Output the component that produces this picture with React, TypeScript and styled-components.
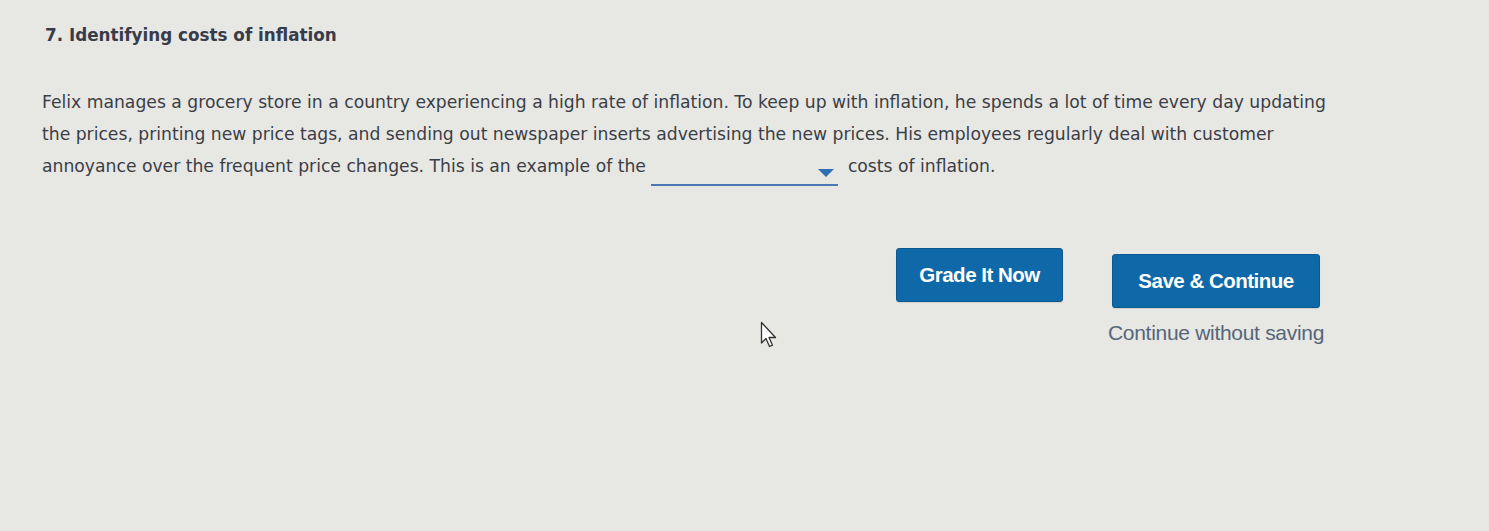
import styled, { createGlobalStyle } from 'styled-components';

const GlobalStyle = createGlobalStyle`
  html, body {
    margin: 0;
    padding: 0;
    background: #e7e7e4;
  }
  body {
    font-family: "DejaVu Sans", Verdana, sans-serif;
    color: #3b3e45;
  }
`;

const Page = styled.div`
  position: relative;
  width: 1489px;
  height: 531px;
  box-sizing: border-box;
  padding: 25px 40px 0 42px;
  overflow: hidden;
`;

const Title = styled.h1`
  font-size: 16.8px;
  font-weight: 700;
  margin: 0 0 41px 3px;
  color: #383c48;
`;

const Body = styled.p`
  width: 1300px;
  margin: 0;
  font-size: 17.2px;
  line-height: 32px;
  color: #3b3e45;
`;

const Blank = styled.span`
  display: inline-flex;
  justify-content: flex-end;
  align-items: flex-end;
  width: 187px;
  height: 22px;
  margin: 0 10px 0 5px;
  border-bottom: 2px solid #4a78b3;
  vertical-align: -5px;
  box-sizing: border-box;
  padding: 0 4px 7px 0;
`;

const Arrow = styled.span`
  width: 0;
  height: 0;
  border-left: 8px solid transparent;
  border-right: 8px solid transparent;
  border-top: 8px solid #2f6fb4;
`;

const Actions = styled.div`
  display: flex;
  align-items: flex-start;
  gap: 45px;
  margin: 62px 0 0 854px;
`;

const Button = styled.button`
  font-family: "Liberation Sans", Arial, sans-serif;
  font-weight: 700;
  font-size: 20.5px;
  letter-spacing: -0.5px;
  color: #fff;
  background: #0f68a8;
  border: 1px solid #0c5a93;
  border-radius: 3px;
  height: 54px;
  padding: 0 22px;
  cursor: pointer;
  box-shadow: 0 1px 1px rgba(0, 0, 0, 0.1);
`;

const GradeButton = styled(Button)`
  width: 167px;
`;

const SaveColumn = styled.div`
  display: flex;
  flex-direction: column;
  align-items: center;
  gap: 13px;
  margin-top: 6px;
`;

const SaveButton = styled(Button)`
  width: 208px;
`;

const TextLink = styled.a`
  font-family: "Liberation Sans", Arial, sans-serif;
  font-size: 21px;
  letter-spacing: -0.3px;
  color: #556679;
  text-decoration: none;
  cursor: pointer;
`;

const Pointer = styled.svg`
  position: absolute;
  left: 760px;
  top: 321px;
`;

export default function App() {
  return (
    <>
      <GlobalStyle />
      <Page>
        <Title>7. Identifying costs of inflation</Title>
        <Body>
          Felix manages a grocery store in a country experiencing a high rate of inflation. To keep up
          with inflation, he spends a lot of time every day updating the prices, printing new price
          tags, and sending out newspaper inserts advertising the new prices. His employees regularly
          deal with customer annoyance over the frequent price changes. This is an example of the
          <Blank>
            <Arrow />
          </Blank>
          costs of inflation.
        </Body>
        <Actions>
          <GradeButton>Grade It Now</GradeButton>
          <SaveColumn>
            <SaveButton>Save &amp; Continue</SaveButton>
            <TextLink>Continue without saving</TextLink>
          </SaveColumn>
        </Actions>
        <Pointer width="20" height="30" viewBox="0 0 20 30">
          <path
            d="M1.5 1.5 L1.5 22 L6 17.5 L9.5 25.5 L12.5 24.2 L9 16.5 L15.5 16.5 Z"
            fill="#fff"
            stroke="#333"
            strokeWidth="1.3"
            strokeLinejoin="round"
          />
        </Pointer>
      </Page>
    </>
  );
}
